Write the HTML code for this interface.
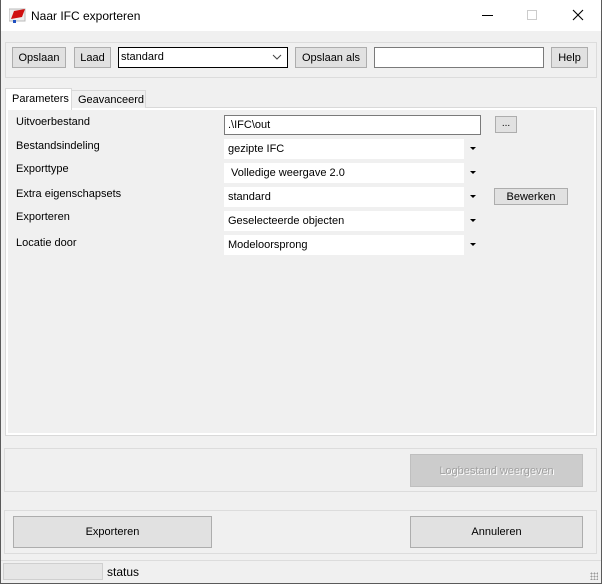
<!DOCTYPE html>
<html><head><style>
*{box-sizing:border-box;margin:0;padding:0}
body{width:602px;height:584px;position:relative;background:#f0f0f0;font-family:"Liberation Sans",sans-serif;font-size:11px;color:#000;overflow:hidden}
.a{position:absolute}
.btn{position:absolute;background:#e1e1e1;border:1px solid #adadad;display:flex;align-items:center;justify-content:center;font-size:11px}
.grp{position:absolute;border:1px solid #dcdcdc}
.lbl{position:absolute;left:16px;font-size:11px}
.cb{position:absolute;left:224px;width:257px;height:20px;background:#fff;padding:4px 0 0 4px}
.cb .ar{position:absolute;right:0;top:0;width:17px;height:20px;background:#f0f0f0}
.cb .ar:after{content:"";position:absolute;left:6px;top:8px;border-left:3px solid transparent;border-right:3px solid transparent;border-top:3px solid #000}
</style></head><body>
<div class="a" style="left:0;top:0;width:602px;height:31px;background:#fff"></div>
<div class="a" style="left:0;top:0;width:1px;height:584px;background:#5a5a5a"></div>
<div class="a" style="right:0;top:0;width:1px;height:584px;background:#5a5a5a"></div>
<div class="a" style="left:0;bottom:0;width:602px;height:1px;background:#5a5a5a"></div>
<svg class="a" style="left:9px;top:8px" width="18" height="16"><rect x="0" y="1" width="16" height="12" fill="#eee" stroke="#bbb"/><polygon points="2,11 5,3 16,1 13,9" fill="#d01010"/><rect x="4" y="12" width="3" height="3" fill="#2050c0"/></svg>
<div class="a" style="left:31px;top:9px;font-size:12px">Naar IFC exporteren</div>
<div class="a" style="left:482px;top:15px;width:11px;height:1px;background:#000"></div>
<div class="a" style="left:527px;top:10px;width:10px;height:10px;border:1px solid #ccc"></div>
<svg class="a" style="left:572px;top:9px" width="12" height="12"><path d="M1 1L11 11M11 1L1 11" stroke="#000" stroke-width="1.1"/></svg>

<div class="grp" style="left:5px;top:42px;width:592px;height:36px"></div>
<div class="btn" style="left:12px;top:47px;width:54px;height:21px">Opslaan</div>
<div class="btn" style="left:74px;top:47px;width:37px;height:21px">Laad</div>
<div class="a" style="left:118px;top:47px;width:170px;height:21px;background:#fff;border:1px solid #000;padding:3px 0 0 2px">standard</div>
<svg class="a" style="left:272px;top:54px" width="10" height="7"><path d="M1 1L5 5L9 1" stroke="#444" fill="none"/></svg>
<div class="btn" style="left:295px;top:47px;width:72px;height:21px">Opslaan als</div>
<div class="a" style="left:374px;top:47px;width:170px;height:21px;background:#fff;border:1px solid #7a7a7a"></div>
<div class="btn" style="left:551px;top:47px;width:37px;height:21px">Help</div>

<div class="a" style="left:5px;top:107px;width:592px;height:329px;border:1px solid #d9d9d9;background:#fff"></div>
<div class="a" style="left:8px;top:110px;width:586px;height:323px;background:#f0f0f0"></div>
<div class="a" style="left:71px;top:90px;width:75px;height:18px;border:1px solid #d9d9d9;border-bottom:none;background:#f0f0f0;padding:3px 0 0 6px">Geavanceerd</div>
<div class="a" style="left:5px;top:88px;width:67px;height:22px;border:1px solid #d9d9d9;border-bottom:none;background:#fff;padding:4px 0 0 6px">Parameters</div>

<div class="lbl" style="top:116px">Uitvoerbestand</div>
<div class="lbl" style="top:140px">Bestandsindeling</div>
<div class="lbl" style="top:163px">Exporttype</div>
<div class="lbl" style="top:188px">Extra eigenschapsets</div>
<div class="lbl" style="top:211px">Exporteren</div>
<div class="lbl" style="top:237px">Locatie door</div>

<div class="a" style="left:224px;top:115px;width:257px;height:20px;background:#fff;border:1px solid #7a7a7a;padding:3px 0 0 3px">.\IFC\out</div>
<div class="btn" style="left:495px;top:116px;width:22px;height:17px;font-size:10px;padding-bottom:3px">...</div>
<div class="cb" style="top:139px">gezipte IFC<div class="ar"></div></div>
<div class="cb" style="top:163px">&nbsp;Volledige weergave 2.0<div class="ar"></div></div>
<div class="cb" style="top:187px">standard<div class="ar"></div></div>
<div class="cb" style="top:211px">Geselecteerde objecten<div class="ar"></div></div>
<div class="cb" style="top:235px">Modeloorsprong<div class="ar"></div></div>
<div class="btn" style="left:494px;top:188px;width:74px;height:17px">Bewerken</div>

<div class="grp" style="left:4px;top:448px;width:593px;height:44px"></div>
<div class="btn" style="left:410px;top:454px;width:173px;height:33px;background:#cccccc;border-color:#bfbfbf;color:#a0a0a0;text-shadow:1px 1px 0 #fff">Logbestand weergeven</div>
<div class="grp" style="left:4px;top:510px;width:593px;height:44px"></div>
<div class="btn" style="left:13px;top:516px;width:199px;height:32px">Exporteren</div>
<div class="btn" style="left:410px;top:516px;width:173px;height:32px">Annuleren</div>

<div class="a" style="left:1px;top:560px;width:600px;height:1px;background:#dcdcdc"></div>
<div class="a" style="left:3px;top:563px;width:100px;height:17px;border:1px solid #cfcfcf;background:#e6e6e6"></div>
<div class="a" style="left:107px;top:565px;font-size:12px">status</div>
<div class="a" style="left:590px;top:572px;width:8px;height:8px;background:radial-gradient(circle,#999 0.8px,transparent 1px) 0 0/3px 3px"></div>
</body></html>
